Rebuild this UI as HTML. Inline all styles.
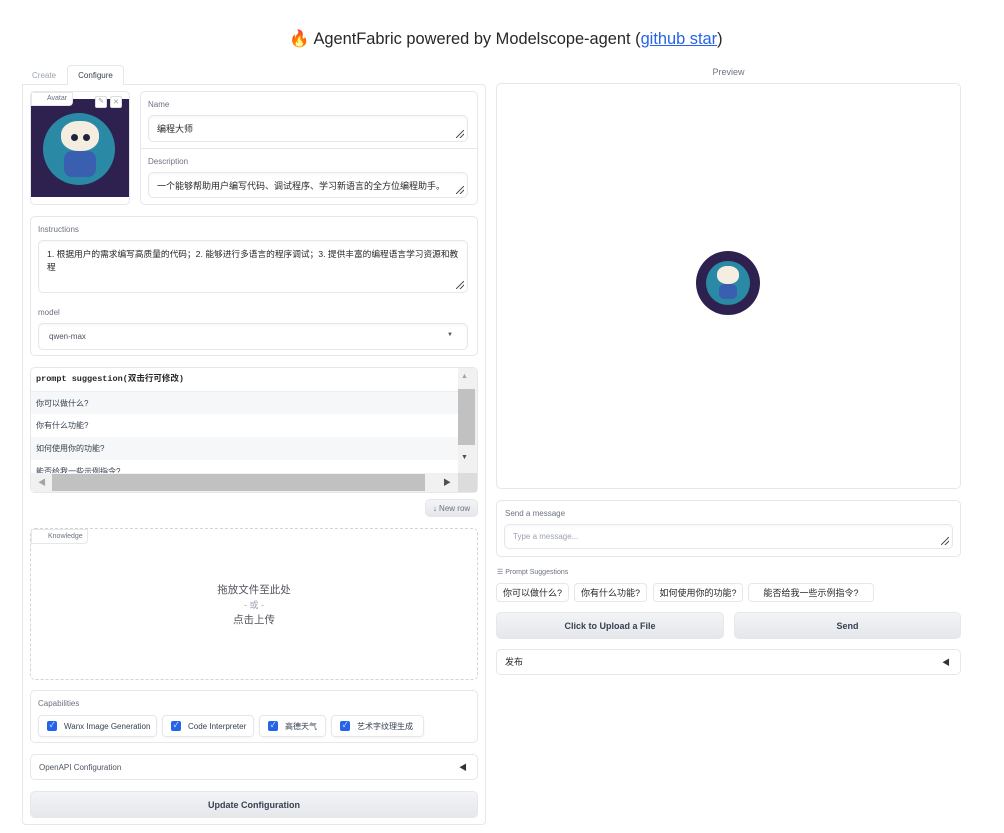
<!DOCTYPE html>
<html><head><meta charset="utf-8"><style>
*{box-sizing:border-box;margin:0;padding:0}
body{width:1004px;height:833px;background:#fff;font-family:"Liberation Sans","Noto Sans CJK SC",sans-serif;color:#27272a;position:relative;overflow:hidden;font-size:9px}
.a{position:absolute}
.box{position:absolute;border:1px solid #e5e7eb;border-radius:5px;background:#fff}
.lbl{position:absolute;font-size:8px;color:#6b7280}
.inp{position:absolute;border:1px solid #e5e7eb;border-radius:5px;background:#fff;font-size:9px;padding-left:8px;display:flex;align-items:center;box-shadow:inset 0 1px 2px rgba(0,0,0,.04)}
.rs{position:absolute;right:3px;bottom:3px;width:8px;height:8px;background:linear-gradient(135deg,transparent 45%,#555 45%,#555 55%,transparent 55%,transparent 70%,#555 70%,#555 80%,transparent 80%)}
.btn{position:absolute;background:linear-gradient(#f3f4f6,#e5e7eb);border:1px solid #e5e7eb;border-radius:5px;display:flex;align-items:center;justify-content:center;font-size:9px;font-weight:bold;color:#374151}
.chip{position:absolute;border:1px solid #e5e7eb;border-radius:4px;font-size:9px;display:flex;align-items:center;justify-content:center;top:583px;height:19px}
.cb{position:absolute;top:715px;height:22px;border:1px solid #e5e7eb;border-radius:4px;font-size:8px;display:flex;align-items:center;padding-left:8px;color:#374151;box-shadow:0 1px 2px rgba(0,0,0,.05)}
.ck{width:10px;height:10px;background:#2563eb;border-radius:2px;margin-right:7px;color:#fff;font-size:7px;line-height:10px;text-align:center}
.row{position:absolute;left:31px;width:427px;height:23px;font-size:8px;color:#374151;padding-left:5px;line-height:23px}
</style></head><body>
<div class="a" style="left:4px;top:30px;width:1004px;text-align:center;font-size:16.4px;color:#27272a">🔥 AgentFabric powered by Modelscope-agent (<span style="color:#2563eb;text-decoration:underline">github star</span>)</div>

<div class="a" style="left:32px;top:71px;font-size:8px;color:#9ca3af">Create</div>
<div class="a" style="left:67px;top:65px;width:57px;height:20px;border:1px solid #e5e7eb;border-bottom:none;border-radius:4px 4px 0 0;background:#fff;font-size:8px;color:#374151;text-align:center;line-height:20px;z-index:2">Configure</div>
<div class="a" style="left:22px;top:84px;width:464px;height:741px;border:1px solid #e5e7eb;border-radius:0 4px 4px 4px"></div>

<div class="box" style="left:30px;top:91px;width:100px;height:114px"></div>
<div class="a" style="left:31px;top:99px;width:98px;height:98px;background:#2e2150;overflow:hidden">
<div class="a" style="left:12px;top:14px;width:72px;height:72px;border-radius:50%;background:#2a8aa6"></div>
<div class="a" style="left:30px;top:22px;width:38px;height:30px;border-radius:45%;background:#f4ede0"></div>
<div class="a" style="left:33px;top:52px;width:32px;height:26px;border-radius:8px;background:#3a5fb0"></div>
<div class="a" style="left:40px;top:35px;width:7px;height:7px;border-radius:50%;background:#1a2540"></div>
<div class="a" style="left:52px;top:35px;width:7px;height:7px;border-radius:50%;background:#1a2540"></div>
</div>
<div class="a" style="left:31px;top:92px;width:42px;height:14px;background:#fff;border:1px solid #e5e7eb;border-radius:0 0 4px 0;font-size:7px;color:#6b7280;line-height:12px;padding-left:15px">Avatar</div>
<div class="a" style="left:95px;top:96px;width:12px;height:12px;background:#fff;border:1px solid #ddd;border-radius:2px;font-size:7px;text-align:center;color:#999">✎</div>
<div class="a" style="left:110px;top:96px;width:12px;height:12px;background:#fff;border:1px solid #ddd;border-radius:2px;font-size:7px;text-align:center;color:#999;line-height:11px">✕</div>

<div class="box" style="left:140px;top:91px;width:338px;height:114px"></div>
<div class="a" style="left:141px;top:148px;width:336px;border-top:1px solid #e5e7eb"></div>
<div class="lbl" style="left:148px;top:100px">Name</div>
<div class="inp" style="left:148px;top:115px;width:320px;height:27px">编程大师<div class="rs"></div></div>
<div class="lbl" style="left:148px;top:157px">Description</div>
<div class="inp" style="left:148px;top:172px;width:320px;height:26px">一个能够帮助用户编写代码、调试程序、学习新语言的全方位编程助手。<div class="rs"></div></div>

<div class="box" style="left:30px;top:216px;width:448px;height:140px"></div>
<div class="lbl" style="left:38px;top:225px">Instructions</div>
<div class="inp" style="left:38px;top:240px;width:430px;height:53px;align-items:flex-start;padding-top:7px;padding-right:0;line-height:13px;font-size:8.7px;display:block;white-space:nowrap;overflow:hidden">1. 根据用户的需求编写高质量的代码；2. 能够进行多语言的程序调试；3. 提供丰富的编程语言学习资源和教<br>程<div class="rs"></div></div>
<div class="lbl" style="left:38px;top:308px">model</div>
<div class="inp" style="left:38px;top:323px;width:430px;height:27px;font-size:8px;color:#4b5563;padding-left:10px">qwen-max<span class="a" style="right:14px;top:8px;font-size:6px">▼</span></div>

<div class="box" style="left:30px;top:367px;width:448px;height:126px;overflow:hidden"></div>
<div class="row" style="top:368px;font-family:'Liberation Mono','Noto Sans CJK SC',monospace;font-weight:bold;font-size:8.5px;color:#27272a">prompt suggestion(双击行可修改)</div>
<div class="row" style="top:391px;background:#f6f7f8;border-top:1px solid #eee">你可以做什么?</div>
<div class="row" style="top:414px">你有什么功能?</div>
<div class="row" style="top:437px;background:#f6f7f8">如何使用你的功能?</div>
<div class="row" style="top:460px;height:13px;overflow:hidden">能否给我一些示例指令?</div>
<div class="a" style="left:458px;top:368px;width:19px;height:105px;background:#f1f1f1"></div>
<div class="a" style="left:458px;top:389px;width:17px;height:56px;background:#c1c1c1"></div>
<div class="a" style="left:461px;top:373px;font-size:7px;color:#a3a3a3">▲</div>
<div class="a" style="left:461px;top:454px;font-size:7px;color:#505050">▼</div>
<div class="a" style="left:31px;top:473px;width:427px;height:19px;background:#f1f1f1"></div>
<div class="a" style="left:52px;top:474px;width:373px;height:17px;background:#c1c1c1"></div>
<div class="a" style="left:38px;top:477px;font-size:8px;color:#a3a3a3">◀</div>
<div class="a" style="left:443px;top:477px;font-size:8px;color:#505050">▶</div>
<div class="a" style="left:458px;top:473px;width:19px;height:19px;background:#dcdcdc"></div>

<div class="btn" style="left:425px;top:499px;width:53px;height:18px;font-weight:normal;font-size:8px;color:#6b7280">↓ New row</div>

<div class="a" style="left:30px;top:528px;width:448px;height:152px;border:1px dashed #d4d4d8;border-radius:5px"></div>
<div class="a" style="left:31px;top:529px;width:57px;height:15px;border:1px solid #e5e7eb;border-radius:0 0 4px 0;font-size:7px;color:#6b7280;line-height:13px;padding-left:16px">Knowledge</div>
<div class="a" style="left:30px;top:583px;width:448px;text-align:center;font-size:10.5px;color:#52525b;line-height:15px">拖放文件至此处<br><span style="font-size:9px;color:#9ca3af">- 或 -</span><br>点击上传</div>

<div class="box" style="left:30px;top:690px;width:448px;height:53px"></div>
<div class="lbl" style="left:38px;top:699px">Capabilities</div>
<div class="cb" style="left:38px;width:119px"><div class="ck">✓</div>Wanx Image Generation</div>
<div class="cb" style="left:162px;width:92px"><div class="ck">✓</div>Code Interpreter</div>
<div class="cb" style="left:259px;width:67px"><div class="ck">✓</div>高德天气</div>
<div class="cb" style="left:331px;width:93px"><div class="ck">✓</div>艺术字纹理生成</div>

<div class="box" style="left:30px;top:754px;width:448px;height:26px;font-size:8px;color:#4b5563;line-height:25px;padding-left:8px">OpenAPI Configuration<span class="a" style="right:10px;top:0;font-size:8px;color:#333">◀</span></div>
<div class="btn" style="left:30px;top:791px;width:448px;height:27px">Update Configuration</div>

<div class="a" style="left:496px;top:67px;width:465px;text-align:center;font-size:9px;color:#6b7280">Preview</div>
<div class="box" style="left:496px;top:83px;width:465px;height:406px"></div>
<div class="a" style="left:696px;top:251px;width:64px;height:64px;border-radius:50%;background:#2e2150;overflow:hidden">
<div class="a" style="left:10px;top:10px;width:44px;height:44px;border-radius:50%;background:#2a8aa6"></div>
<div class="a" style="left:21px;top:15px;width:22px;height:18px;border-radius:45%;background:#f4ede0"></div>
<div class="a" style="left:23px;top:33px;width:18px;height:15px;border-radius:5px;background:#3a5fb0"></div>
</div>

<div class="box" style="left:496px;top:500px;width:465px;height:57px"></div>
<div class="lbl" style="left:505px;top:509px">Send a message</div>
<div class="inp" style="left:504px;top:524px;width:449px;height:25px;font-size:8px;color:#9ca3af">Type a message...<div class="rs"></div></div>
<div class="a" style="left:497px;top:568px;font-size:7px;color:#6b7280">☰ Prompt Suggestions</div>
<div class="chip" style="left:496px;width:73px">你可以做什么?</div>
<div class="chip" style="left:574px;width:73px">你有什么功能?</div>
<div class="chip" style="left:653px;width:90px">如何使用你的功能?</div>
<div class="chip" style="left:748px;width:126px">能否给我一些示例指令?</div>
<div class="btn" style="left:496px;top:612px;width:228px;height:27px">Click to Upload a File</div>
<div class="btn" style="left:734px;top:612px;width:227px;height:27px">Send</div>
<div class="box" style="left:496px;top:649px;width:465px;height:26px;font-size:9px;line-height:25px;padding-left:8px">发布<span class="a" style="right:10px;top:0;font-size:8px;color:#333">◀</span></div>
</body></html>
